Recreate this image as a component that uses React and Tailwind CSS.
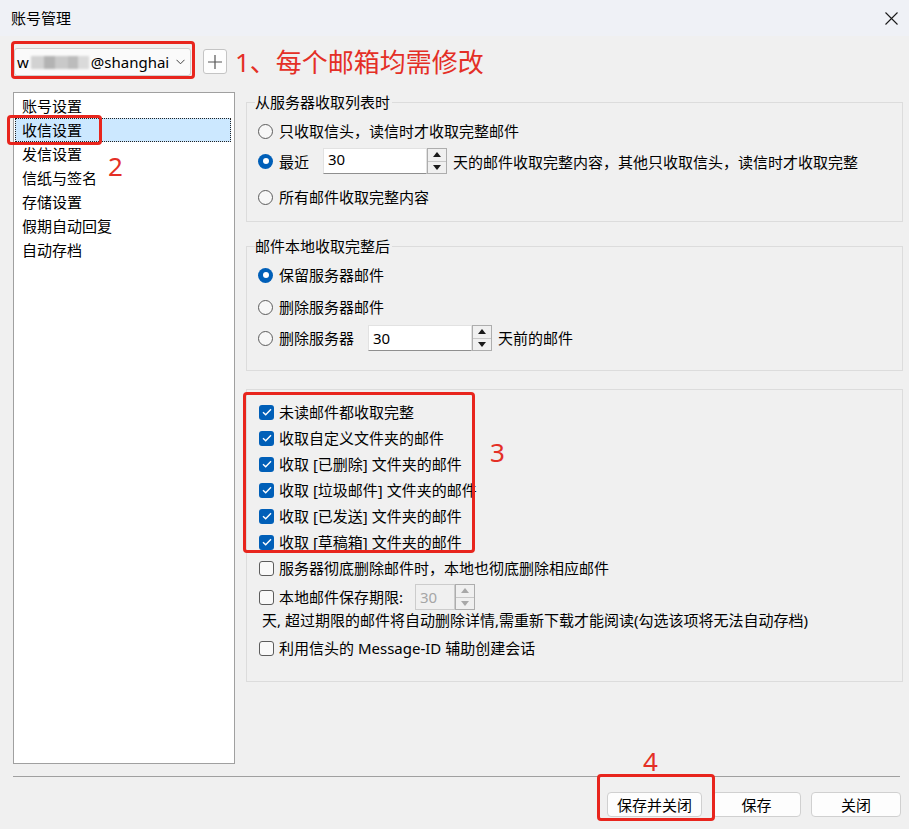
import React from 'react';

const FONT = "font-['Noto_Sans','Noto_Sans_CJK_SC',sans-serif]";

function Radio({ checked }) {
  if (checked) {
    return (
      <span className="w-[15px] h-[15px] rounded-full bg-[#005fb8] flex items-center justify-center shrink-0">
        <span className="w-[6px] h-[6px] rounded-full bg-white" />
      </span>
    );
  }
  return <span className="w-[15px] h-[15px] rounded-full border border-[#5c5c5c] bg-[#f7f7f7] shrink-0" />;
}

function Check({ checked }) {
  if (checked) {
    return (
      <span className="w-[15px] h-[15px] rounded-[3px] bg-[#005fb8] flex items-center justify-center shrink-0">
        <svg width="10" height="8" viewBox="0 0 10 8">
          <path d="M1 4.2 L3.7 6.7 L9 1.3" fill="none" stroke="white" strokeWidth="1.4" />
        </svg>
      </span>
    );
  }
  return <span className="w-[15px] h-[15px] rounded-[3px] border border-[#5c5c5c] bg-[#f9f9f9] shrink-0" />;
}

function Arrows({ disabled }) {
  const fill = disabled ? '#a8a8a8' : '#1a1a1a';
  return (
    <div className="w-[20px] h-full flex flex-col border border-[#adadad] bg-[#f0f0f0]">
      <div className="flex-1 flex items-center justify-center border-b border-[#c8c8c8]">
        <svg width="8" height="5" viewBox="0 0 8 5"><path d="M0 5 L4 0 L8 5 Z" fill={fill} /></svg>
      </div>
      <div className="flex-1 flex items-center justify-center">
        <svg width="8" height="5" viewBox="0 0 8 5"><path d="M0 0 L8 0 L4 5 Z" fill={fill} /></svg>
      </div>
    </div>
  );
}

function Spin({ inputClass, disabled }) {
  return (
    <div className="flex h-[26px]">
      <div className={inputClass}>30</div>
      <Arrows disabled={disabled} />
    </div>
  );
}

const menu = ['账号设置', '收信设置', '发信设置', '信纸与签名', '存储设置', '假期自动回复', '自动存档'];

const folders = [
  '未读邮件都收取完整',
  '收取自定义文件夹的邮件',
  '收取 [已删除] 文件夹的邮件',
  '收取 [垃圾邮件] 文件夹的邮件',
  '收取 [已发送] 文件夹的邮件',
  '收取 [草稿箱] 文件夹的邮件',
];

export default function App() {
  return (
    <div className={`relative w-[909px] h-[829px] overflow-hidden bg-[#f0f0f0] text-[15px] text-black ${FONT}`}>
      {/* title bar */}
      <div className="h-[36px] bg-[#eff1f6] flex items-center justify-between pl-[11px] pr-[10px]">
        <span className="leading-[20px]">账号管理</span>
        <svg width="13" height="13" viewBox="0 0 13 13" className="mr-[1px]">
          <path d="M0.5 0.5 L12.5 12.5 M12.5 0.5 L0.5 12.5" stroke="#1a1a1a" strokeWidth="1.1" />
        </svg>
      </div>

      {/* account picker */}
      <div className="h-[56px] flex items-start pt-[12px] pl-[14px]">
        <div className="w-[177px] h-[28px] bg-[#fafafa] border border-[#d0d0d0] rounded-[3px] flex items-center pl-[2px] pr-[5px]">
          <span className="leading-[20px]">w</span>
          <span className="flex items-center h-[13px] ml-[2px] blur-[1px]">
            <span className="w-[13px] h-[13px] bg-[#d2d2d2]" />
            <span className="w-[11px] h-[13px] bg-[#b3b3b3]" />
            <span className="w-[13px] h-[13px] bg-[#c9c9c9]" />
            <span className="w-[10px] h-[13px] bg-[#bcbcbc]" />
            <span className="w-[11px] h-[13px] bg-[#dadada]" />
          </span>
          <span className="leading-[20px] ml-[2px]">@shanghai</span>
          <svg width="9" height="6" viewBox="0 0 9 6" className="ml-auto">
            <path d="M0.5 0.8 L4.5 4.8 L8.5 0.8" fill="none" stroke="#444" strokeWidth="1" />
          </svg>
        </div>
        <div className="ml-[12px] mt-[1px] w-[24px] h-[25px] bg-[#fdfdfd] border border-[#c4c4c4] rounded-[3px] flex items-center justify-center">
          <svg width="14" height="14" viewBox="0 0 14 14">
            <path d="M7 0 L7 14 M0 7 L14 7" stroke="#555" strokeWidth="1.2" />
          </svg>
        </div>
        <span className="ml-[8px] text-[26px] leading-[28px] text-[#e42f26]">1、每个邮箱均需修改</span>
      </div>

      {/* main */}
      <div className="flex pl-[13px] gap-[11px] h-[672px]">
        <div className="w-[222px] h-full border border-[#a0a0a0] bg-white pt-[1px]">
          {menu.map((m) => (
            <div
              key={m}
              className={
                m === '收信设置'
                  ? 'ml-[1px] w-[216px] h-[24px] leading-[22px] pl-[6px] border border-dotted border-[#222] bg-[#cce8ff]'
                  : 'ml-[1px] w-[216px] h-[24px] leading-[22px] pl-[6px] border border-transparent'
              }
            >
              {m}
            </div>
          ))}
        </div>

        <div className="w-[657px] flex flex-col">
          {/* group 1 */}
          <fieldset className="border border-[#dcdcdc] px-[8px] pb-[12px]">
            <legend className="leading-[20px] pr-[2px]">从服务器收取列表时</legend>
            <div className="pt-[7px] flex flex-col">
              <div className="flex items-center h-[24px] pl-[3px] gap-[6px]">
                <Radio />
                <span>只收取信头，读信时才收取完整邮件</span>
              </div>
              <div className="flex items-center h-[26px] mt-[5px] pl-[3px]">
                <Radio checked />
                <span className="ml-[6px] mt-[3px]">最近</span>
                <div className="ml-[14px]">
                  <Spin inputClass="w-[104px] h-full bg-white border border-[#e2e2e2] border-b-[#8f8f8f] pl-[4px] leading-[20px]" />
                </div>
                <span className="ml-[6px] mt-[3px]">天的邮件收取完整内容，其他只收取信头，读信时才收取完整</span>
              </div>
              <div className="flex items-center h-[24px] mt-[11px] pl-[3px] gap-[6px]">
                <Radio />
                <span>所有邮件收取完整内容</span>
              </div>
            </div>
          </fieldset>

          {/* group 2 */}
          <fieldset className="mt-[14px] border border-[#dcdcdc] px-[8px] pb-[19px]">
            <legend className="leading-[20px] pr-[2px]">邮件本地收取完整后</legend>
            <div className="pt-[7px] flex flex-col">
              <div className="flex items-center h-[24px] pl-[3px] gap-[6px]">
                <Radio checked />
                <span>保留服务器邮件</span>
              </div>
              <div className="flex items-center h-[24px] mt-[8px] pl-[3px] gap-[6px]">
                <Radio />
                <span>删除服务器邮件</span>
              </div>
              <div className="flex items-center h-[26px] mt-[6px] pl-[3px]">
                <Radio />
                <span className="ml-[6px]">删除服务器</span>
                <div className="ml-[14px]">
                  <Spin inputClass="w-[104px] h-full bg-white border border-[#e2e2e2] border-b-[#8f8f8f] pl-[4px] leading-[24px]" />
                </div>
                <span className="ml-[6px]">天前的邮件</span>
              </div>
            </div>
          </fieldset>

          {/* group 3 */}
          <div className="mt-[18px] border border-[#dcdcdc] px-[8px] pt-[9px] pb-[20px] flex flex-col">
            {folders.map((f) => (
              <div key={f} className="flex items-center h-[26px] pl-[4px] gap-[5px]">
                <Check checked />
                <span>{f}</span>
              </div>
            ))}
            <div className="flex items-center h-[26px] pl-[4px] gap-[5px]">
              <Check />
              <span>服务器彻底删除邮件时，本地也彻底删除相应邮件</span>
            </div>
            <div className="flex items-center h-[26px] mt-[3px] pl-[4px]">
              <Check />
              <span className="ml-[5px]">本地邮件保存期限:</span>
              <div className="ml-[12px]">
                <Spin disabled inputClass="w-[40px] h-full bg-[#f0f0f0] border border-[#cccccc] pl-[4px] leading-[24px] text-[#a6a6a6]" />
              </div>
            </div>
            <div className="h-[20px] leading-[20px] pl-[7px]">
              天, 超过期限的邮件将自动删除详情,需重新下载才能阅读(勾选该项将无法自动存档)
            </div>
            <div className="flex items-center h-[26px] mt-[5px] pl-[4px] gap-[5px]">
              <Check />
              <span>利用信头的 Message-ID 辅助创建会话</span>
            </div>
          </div>
        </div>
      </div>

      {/* separator */}
      <div className="mt-[12px] ml-[13px] w-[887px] h-px bg-[#a0a0a0]" />

      {/* buttons */}
      <div className="mt-[15px] flex justify-end pr-[8px] gap-[10px]">
        <button className="w-[95px] h-[25px] bg-[#fdfdfd] border border-[#d0d0d0] rounded-[4px] leading-[22px]">保存并关闭</button>
        <button className="w-[89px] h-[25px] bg-[#fdfdfd] border border-[#d0d0d0] rounded-[4px] leading-[22px]">保存</button>
        <button className="w-[90px] h-[25px] bg-[#fdfdfd] border border-[#d0d0d0] rounded-[4px] leading-[22px]">关闭</button>
      </div>

      {/* red annotations */}
      <div className="absolute left-[11px] top-[41px] w-[184px] h-[38px] border-[3px] border-[#e8251d] rounded-[4px]" />
      <div className="absolute left-[7px] top-[115px] w-[95px] h-[30px] border-[3px] border-[#e8251d] rounded-[4px]" />
      <span className="absolute left-[108px] top-[152px] text-[26px] leading-[28px] text-[#e42f26]">2</span>
      <div className="absolute left-[243px] top-[392px] w-[232px] h-[161px] border-[3px] border-[#e8251d] rounded-[4px]" />
      <span className="absolute left-[490px] top-[438px] text-[26px] leading-[28px] text-[#e42f26]">3</span>
      <div className="absolute left-[597px] top-[774px] w-[118px] h-[47px] border-[3px] border-[#e8251d] rounded-[4px]" />
      <span className="absolute left-[643px] top-[747px] text-[26px] leading-[28px] text-[#e42f26]">4</span>
    </div>
  );
}
